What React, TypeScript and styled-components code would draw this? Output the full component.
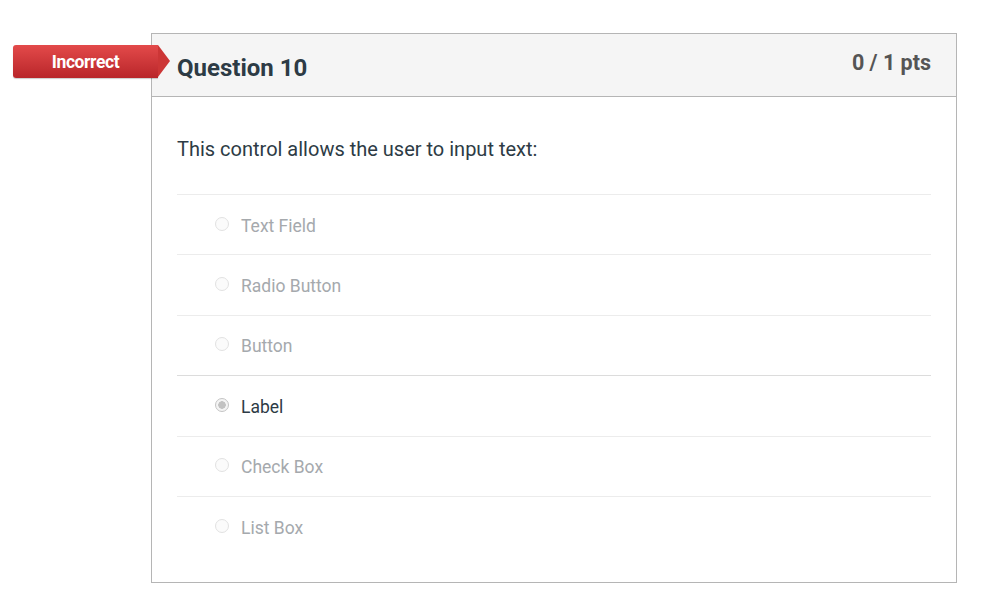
import React from 'react';
import styled, { createGlobalStyle } from 'styled-components';

const GlobalStyle = createGlobalStyle`
    body {
        margin: 0;
        background: #ffffff;
        font-family: Roboto, "Liberation Sans", Arial, sans-serif;
    }
`;

const Page = styled.div`
    padding: 33px 0 0 151px;
`;

const Card = styled.div`
    position: relative;
    width: 806px;
    height: 550px;
    box-sizing: border-box;
    border: 1px solid #b5b5b5;
    background: #ffffff;
`;

const Badge = styled.div`
    position: absolute;
    left: -139px;
    top: 11px;
    width: 145px;
    height: 33px;
    display: flex;
    align-items: center;
    justify-content: center;
    color: #ffffff;
    font-size: 17.5px;
    font-weight: 700;
    letter-spacing: -0.4px;
    border-radius: 3px 0 0 3px;
    background: linear-gradient(#e34a4a, #b9262a);
    box-shadow: 0 1px 1px rgba(0, 0, 0, 0.2);

    &::after {
        content: '';
        position: absolute;
        right: -12px;
        top: 0;
        border-top: 16.5px solid transparent;
        border-bottom: 16.5px solid transparent;
        border-left: 12px solid #cc3636;
    }
`;

const Header = styled.div`
    height: 62px;
    display: flex;
    justify-content: space-between;
    padding: 0 25px 0 25px;
    background: #f5f5f5;
    border-bottom: 1px solid #b5b5b5;
`;

const Title = styled.h2`
    margin: 0;
    padding-top: 20px;
    font-size: 24px;
    font-weight: 700;
    color: #2d3b45;
`;

const Points = styled.div`
    padding-top: 16px;
    font-size: 21.5px;
    font-weight: 700;
    color: #555555;
`;

const Body = styled.div`
    padding: 40px 25px 0 25px;
`;

const Prompt = styled.p`
    margin: 0 0 33px;
    font-size: 20px;
    line-height: 24px;
    color: #2d3b45;
`;

const Answer = styled.div<{ $selected?: boolean }>`
    height: 60.4px;
    box-sizing: border-box;
    display: flex;
    align-items: center;
    padding: 2px 0 0 38px;
    border-top: 1px solid ${(p) => (p.$selected ? '#dcdcdc' : '#ececec')};
    font-size: 17.5px;
    color: ${(p) => (p.$selected ? '#2d3b45' : '#a5a9ad')};
`;

const Radio = styled.span<{ $selected?: boolean }>`
    width: 14px;
    height: 14px;
    box-sizing: border-box;
    border-radius: 50%;
    margin-right: 12px;
    margin-top: -4px;
    border: 1px solid ${(p) => (p.$selected ? '#c4c4c4' : '#e2e2e2')};
    background: ${(p) => (p.$selected ? 'radial-gradient(circle, #c2c2c2 0 3.5px, #f4f4f4 4px)' : '#fbfbfb')};
`;

const answers = ['Text Field', 'Radio Button', 'Button', 'Label', 'Check Box', 'List Box'];
const chosen = 'Label';

const App = () => {
    return (
        <Page>
            <GlobalStyle />
            <Card>
                <Badge>Incorrect</Badge>
                <Header>
                    <Title>Question 10</Title>
                    <Points>0 / 1 pts</Points>
                </Header>
                <Body>
                    <Prompt>This control allows the user to input text:</Prompt>
                    {answers.map((answer) => (
                        <Answer key={answer} $selected={answer === chosen}>
                            <Radio $selected={answer === chosen} />
                            {answer}
                        </Answer>
                    ))}
                </Body>
            </Card>
        </Page>
    );
};

export default App;
